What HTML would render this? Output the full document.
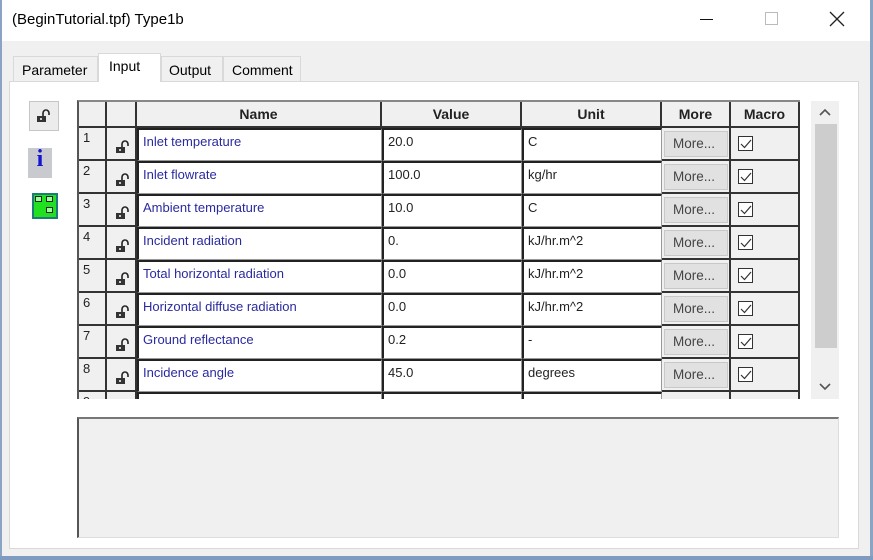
<!DOCTYPE html>
<html><head><meta charset="utf-8"><style>
*{margin:0;padding:0;box-sizing:border-box}
body{width:873px;height:560px;position:relative;background:#fff;font-family:"Liberation Sans",Arial,sans-serif;overflow:hidden}
.a{position:absolute}
.t{font-size:14px;color:#000}
.c{position:absolute;font-size:13px;white-space:nowrap;overflow:hidden}
.hd{background:#f0f0f0;text-align:center;font-weight:bold;color:#222;font-size:14px;line-height:24px;border-right:2px solid #333;border-bottom:2px solid #333}
.num{background:#f0f0f0;border-right:2px solid #333;border-bottom:2px solid #333;font-size:13px;padding:2px 0 0 4px;color:#222}
.lk{background:#f0f0f0;border-right:2px solid #333;border-bottom:2px solid #333}
.w{background:#fff;border-left:2px solid #222;border-top:2px solid #222;border-right:1px solid #999;border-bottom:1px solid #999;padding:4px 0 0 4px;color:#222}
.nm{color:#2a2aa0}
.mb{background:#f0f0f0;border-right:2px solid #333;border-bottom:2px solid #333}
.mb span{position:absolute;left:2px;top:3px;width:64px;height:26px;background:#e1e1e1;border:1px solid #c8c8c8;color:#444;font-size:13.5px;line-height:24px;padding-left:8px}
.mc{background:#f0f0f0;border-right:2px solid #333;border-bottom:2px solid #333}
.mc i{position:absolute;left:7px;top:8px;width:15px;height:15px;border:1px solid #333;background:#fff}
</style></head><body>
<div class="a" style="left:0;top:0;width:2px;height:560px;background:#8aa4c4"></div>
<div class="a" style="right:0;top:0;width:3px;height:560px;background:#8aa4c4"></div>
<div class="a" style="left:0;top:556px;width:873px;height:4px;background:#7f9cc0"></div>
<div class="a t" style="left:12px;top:11px;font-size:15px">(BeginTutorial.tpf) Type1b</div>
<div class="a" style="left:700px;top:19px;width:13px;height:1px;background:#111"></div>
<div class="a" style="left:765px;top:12px;width:13px;height:13px;border:1px solid #bbb"></div>
<svg class="a" style="left:829px;top:11px" width="16" height="16"><path d="M1 1L15 15M15 1L1 15" stroke="#222" stroke-width="1.3"/></svg>
<div class="a" style="left:2px;top:41px;width:868px;height:515px;background:#f0f0f0"></div>
<div class="a" style="left:9px;top:81px;width:850px;height:468px;background:#fff;border:1px solid #d9d9d9"></div>
<div class="a" style="left:13px;top:56px;width:85px;height:25px;background:#f0f0f0;border:1px solid #d9d9d9;border-bottom:none;font-size:14px;padding:5px 0 0 8px">Parameter</div>
<div class="a" style="left:98px;top:53px;width:63px;height:29px;background:#fff;border:1px solid #d9d9d9;border-bottom:none;font-size:14px;padding:4px 0 0 10px">Input</div>
<div class="a" style="left:161px;top:56px;width:62px;height:25px;background:#f0f0f0;border:1px solid #d9d9d9;border-bottom:none;font-size:14px;padding:5px 0 0 7px">Output</div>
<div class="a" style="left:223px;top:56px;width:78px;height:25px;background:#f0f0f0;border:1px solid #d9d9d9;border-bottom:none;font-size:14px;padding:5px 0 0 8px">Comment</div>
<div class="a" style="left:29px;top:101px;width:30px;height:30px;background:#ececec;border:1px solid #c6c6c6"></div>
<svg class="a" style="left:36px;top:108px" width="16" height="16"><path d="M7 8V5a3 3 0 0 1 6 0v2" fill="none" stroke="#222" stroke-width="1.6"/><rect x="1" y="8" width="9" height="6" fill="#333"/><rect x="4" y="10" width="2" height="2" fill="#ccc"/></svg>
<div class="a" style="left:28px;top:148px;width:24px;height:30px;background:#c9c9d0"></div>
<div class="a" style="left:28px;top:146px;width:24px;text-align:center;font:bold 24px 'Liberation Serif',serif;color:#1414d0">i</div>
<div class="a" style="left:32px;top:193px;width:26px;height:26px;background:#20e020;border:2px solid #1e7a7a"></div>
<div class="a" style="left:35px;top:196px;width:7px;height:6px;border:1px solid #222;background:#9f9"></div>
<div class="a" style="left:46px;top:196px;width:7px;height:6px;border:1px solid #222;background:#9f9"></div>
<div class="a" style="left:46px;top:207px;width:7px;height:6px;border:1px solid #222;background:#9f9"></div>
<div class="a" style="left:77px;top:100px;width:723px;height:299px;background:#f0f0f0;border-left:2px solid #555;border-top:2px solid #888;overflow:hidden">
<div style="position:relative;width:723px;height:299px">
<div class="c hd" style="left:0;top:0;width:28px;height:26px"></div>
<div class="c hd" style="left:28px;top:0;width:30px;height:26px"></div>
<div class="c hd" style="left:58px;top:0;width:245px;height:26px">Name</div>
<div class="c hd" style="left:303px;top:0;width:140px;height:26px">Value</div>
<div class="c hd" style="left:443px;top:0;width:140px;height:26px">Unit</div>
<div class="c hd" style="left:583px;top:0;width:69px;height:26px">More</div>
<div class="c hd" style="left:652px;top:0;width:69px;height:26px">Macro</div>
<div id="rows"></div>
</div></div>
<div class="a" style="left:811px;top:101px;width:28px;height:298px;background:#f0f0f0"></div>
<div class="a" style="left:815px;top:124px;width:22px;height:224px;background:#cdcdcd"></div>
<svg class="a" style="left:819px;top:109px" width="12" height="8"><path d="M1 6L6 1L11 6" fill="none" stroke="#555" stroke-width="1.6"/></svg>
<svg class="a" style="left:819px;top:383px" width="12" height="8"><path d="M1 1L6 6L11 1" fill="none" stroke="#555" stroke-width="1.6"/></svg>
<div class="a" style="left:77px;top:417px;width:762px;height:121px;background:#f0f0f0;border-left:2px solid #555;border-top:2px solid #777;border-right:1px solid #ddd;border-bottom:1px solid #ddd"></div>
<script>
var d=[["Inlet temperature","20.0","C"],["Inlet flowrate","100.0","kg/hr"],["Ambient temperature","10.0","C"],["Incident radiation","0.","kJ/hr.m^2"],["Total horizontal radiation","0.0","kJ/hr.m^2"],["Horizontal diffuse radiation","0.0","kJ/hr.m^2"],["Ground reflectance","0.2","-"],["Incidence angle","45.0","degrees"],["","",""]];
var lock='<svg style="position:absolute;left:8px;top:11px" width="16" height="16"><path d="M7 8V5a3 3 0 0 1 6 0v2" fill="none" stroke="#222" stroke-width="1.6"/><rect x="1" y="8" width="9" height="6" fill="#333"/><rect x="4" y="10" width="2" height="2" fill="#ccc"/></svg>';
var h='';
d.forEach(function(r,i){var y=26+i*33;
h+='<div class="c num" style="left:0;top:'+y+'px;width:28px;height:33px">'+(i+1)+'</div>';
h+='<div class="c lk" style="left:28px;top:'+y+'px;width:30px;height:33px">'+(i<8?lock:'')+'</div>';
h+='<div class="c w nm" style="left:58px;top:'+y+'px;width:245px;height:33px">'+r[0]+'</div>';
h+='<div class="c w" style="left:303px;top:'+y+'px;width:140px;height:33px">'+r[1]+'</div>';
h+='<div class="c w" style="left:443px;top:'+y+'px;width:140px;height:33px">'+r[2]+'</div>';
h+='<div class="c mb" style="left:583px;top:'+y+'px;width:69px;height:33px">'+(i<8?'<span>More...</span>':'')+'</div>';
h+='<div class="c mc" style="left:652px;top:'+y+'px;width:69px;height:33px">'+(i<8?'<i><svg style="position:absolute;left:1px;top:2px" width="12" height="10"><path d="M1 5L4.5 8.5L11 1" fill="none" stroke="#333" stroke-width="1.2"/></svg></i>':'')+'</div>';});
document.getElementById('rows').outerHTML=h;
</script>
</body></html>
